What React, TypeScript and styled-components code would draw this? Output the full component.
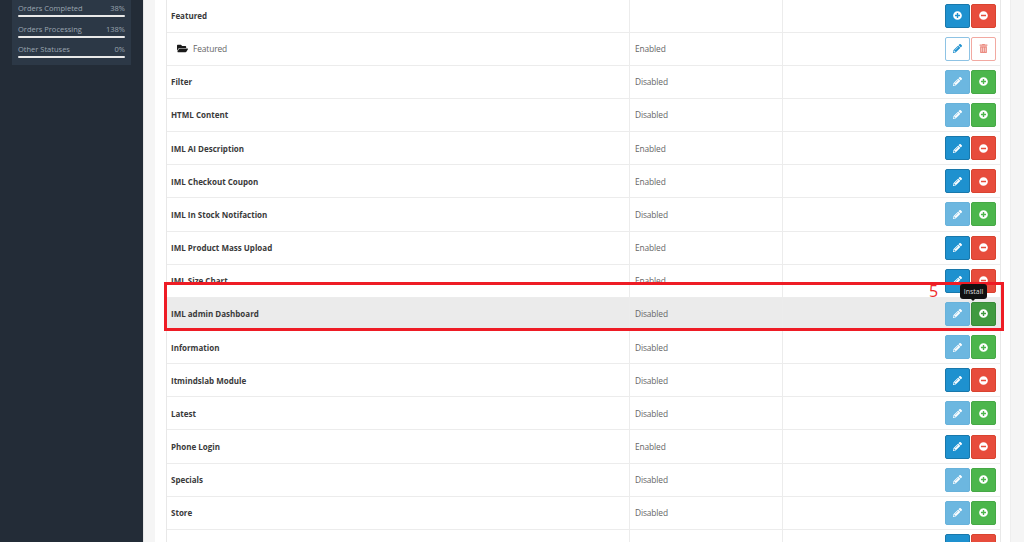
import React from "react";
import styled, { createGlobalStyle } from "styled-components";
import { FaPlusCircle, FaMinusCircle, FaPencilAlt, FaTrashAlt, FaFolderOpen } from "react-icons/fa";

const Global = createGlobalStyle`
  html, body { margin: 0; padding: 0; height: 100%; overflow: hidden; background: #f5f5f5; }
  body { font-family: "Open Sans", "Liberation Sans", sans-serif; }
  * { box-sizing: border-box; }
`;

const Page = styled.div`
  position: relative;
  display: flex;
  width: 1024px;
  height: 542px;
  overflow: hidden;
`;

const Sidebar = styled.aside`
  width: 144px;
  flex: none;
  background: #232c37;
  border-right: 1px solid #e6e6e6;
`;

const StatsBox = styled.div`
  margin: 0 12px;
  width: 119px;
  height: 65px;
  padding: 3px 6px 0;
  background: #2c3846;
  display: flex;
  flex-direction: column;
  gap: 6.5px;
`;

const Stat = styled.div`
  display: flex;
  flex-direction: column;
  gap: 1px;
`;

const StatLabels = styled.div`
  display: flex;
  justify-content: space-between;
  font-size: 7.5px;
  line-height: 11px;
  color: #9aa5b0;
`;

const StatBar = styled.div`
  height: 2px;
  background: #e9e9e9;
  border-radius: 1px;
`;

const Main = styled.main`
  flex: 1;
  padding: 0 13px 0 11px;
`;

const Panel = styled.section`
  background: #fff;
  height: 542px;
  padding: 0 9px 0 11px;
  border-right: 1px solid #eee;
`;

const Table = styled.div`
  border-left: 1px solid #e8e8e8;
  border-right: 1px solid #e8e8e8;
`;

const Row = styled.div<{ $hover?: boolean; $first?: boolean }>`
  display: grid;
  grid-template-columns: 463px 153px 1fr;
  height: ${(p) => (p.$first ? "32.6px" : "33.17px")};
  border-bottom: 1px solid #ececec;
  background: ${(p) => (p.$hover ? "#ebebeb" : "#fff")};
`;

const Cell = styled.div`
  display: flex;
  align-items: center;
  padding: 0 4px 0 5px;
  font-size: 8.4px;
  letter-spacing: -0.12px;
  color: #666;
  border-right: 1px solid #ececec;
  min-width: 0;

  &:last-child {
    border-right: 0;
    justify-content: flex-end;
    gap: 1px;
  }
`;

const Name = styled.span`
  margin-left: -1px;
  font-weight: 700;
  font-size: 8px;
  letter-spacing: 0;
  color: #3a3a3a;
`;

const ChildName = styled.span`
  display: inline-flex;
  align-items: center;
  gap: 5px;
  margin-left: 5px;
  color: #666;

  svg {
    width: 11px;
    height: 11px;
    color: #1a1a1a;
  }
`;

const palette = {
  blue: { bg: "#1e91cf", bd: "#1978ab", fg: "#fff" },
  lightBlue: { bg: "#6cb7e0", bd: "#68b2da", fg: "#fff" },
  red: { bg: "#e74c3c", bd: "#d9432f", fg: "#fff" },
  green: { bg: "#4cb64c", bd: "#46a846", fg: "#fff" },
  greenDark: { bg: "#409a40", bd: "#388a38", fg: "#fff" },
  outlineBlue: { bg: "#fff", bd: "#8ec3e4", fg: "#1e91cf" },
  outlineRed: { bg: "#fff", bd: "#f2a9a1", fg: "#eb8b80" },
};

type Tone = keyof typeof palette;

const ActionButton = styled.span<{ $tone: Tone }>`
  width: 25px;
  height: 24px;
  display: inline-flex;
  align-items: center;
  justify-content: center;
  border-radius: 2px;
  background: ${(p) => palette[p.$tone].bg};
  border: 1px solid ${(p) => palette[p.$tone].bd};
  color: ${(p) => palette[p.$tone].fg};

  svg {
    width: 9px;
    height: 9px;
  }
`;

const Highlight = styled.div`
  position: absolute;
  left: 164px;
  top: 282px;
  width: 840px;
  height: 49px;
  border: 3px solid #ee1c25;
  pointer-events: none;
`;

const StepNumber = styled.span`
  position: absolute;
  left: 929px;
  top: 281px;
  font-size: 16px;
  line-height: 20px;
  color: #ee2b2b;
`;

const Tooltip = styled.div`
  position: absolute;
  left: 960px;
  top: 284px;
  width: 27px;
  height: 15px;
  background: #111;
  color: #ddd;
  border-radius: 3px;
  font-size: 7px;
  line-height: 15px;
  text-align: center;

  &::after {
    content: "";
    position: absolute;
    left: 11px;
    top: 15px;
    border: 2.5px solid transparent;
    border-top-color: #111;
    border-bottom: 0;
  }
`;

type Kind = "header" | "child" | "enabled" | "disabled";
const rows: { name: string; status: string; kind: Kind; hover?: boolean }[] = [
  { name: "Featured", status: "", kind: "header" },
  { name: "Featured", status: "Enabled", kind: "child" },
  { name: "Filter", status: "Disabled", kind: "disabled" },
  { name: "HTML Content", status: "Disabled", kind: "disabled" },
  { name: "IML AI Description", status: "Enabled", kind: "enabled" },
  { name: "IML Checkout Coupon", status: "Enabled", kind: "enabled" },
  { name: "IML In Stock Notifaction", status: "Disabled", kind: "disabled" },
  { name: "IML Product Mass Upload", status: "Enabled", kind: "enabled" },
  { name: "IML Size Chart", status: "Enabled", kind: "enabled" },
  { name: "IML admin Dashboard", status: "Disabled", kind: "disabled", hover: true },
  { name: "Information", status: "Disabled", kind: "disabled" },
  { name: "Itmindslab Module", status: "Disabled", kind: "enabled" },
  { name: "Latest", status: "Disabled", kind: "disabled" },
  { name: "Phone Login", status: "Enabled", kind: "enabled" },
  { name: "Specials", status: "Disabled", kind: "disabled" },
  { name: "Store", status: "Disabled", kind: "disabled" },
  { name: "", status: "", kind: "enabled" },
];

const stats = [
  { label: "Orders Completed", value: "38%" },
  { label: "Orders Processing", value: "138%" },
  { label: "Other Statuses", value: "0%" },
];

function Actions({ kind, hover }: { kind: Kind; hover?: boolean }) {
  if (kind === "header")
    return (
      <>
        <ActionButton $tone="blue"><FaPlusCircle /></ActionButton>
        <ActionButton $tone="red"><FaMinusCircle /></ActionButton>
      </>
    );
  if (kind === "child")
    return (
      <>
        <ActionButton $tone="outlineBlue"><FaPencilAlt /></ActionButton>
        <ActionButton $tone="outlineRed"><FaTrashAlt /></ActionButton>
      </>
    );
  if (kind === "enabled")
    return (
      <>
        <ActionButton $tone="blue"><FaPencilAlt /></ActionButton>
        <ActionButton $tone="red"><FaMinusCircle /></ActionButton>
      </>
    );
  return (
    <>
      <ActionButton $tone="lightBlue"><FaPencilAlt /></ActionButton>
      <ActionButton $tone={hover ? "greenDark" : "green"}><FaPlusCircle /></ActionButton>
    </>
  );
}

export default function App() {
  return (
    <Page>
      <Global />
      <Sidebar>
        <StatsBox>
          {stats.map((s) => (
            <Stat key={s.label}>
              <StatLabels>
                <span>{s.label}</span>
                <span>{s.value}</span>
              </StatLabels>
              <StatBar />
            </Stat>
          ))}
        </StatsBox>
      </Sidebar>
      <Main>
        <Panel>
          <Table>
            {rows.map((r, i) => (
              <Row key={i} $hover={r.hover} $first={i === 0}>
                <Cell>
                  {r.kind === "child" ? (
                    <ChildName><FaFolderOpen />{r.name}</ChildName>
                  ) : (
                    <Name>{r.name}</Name>
                  )}
                </Cell>
                <Cell>{r.status}</Cell>
                <Cell><Actions kind={r.kind} hover={r.hover} /></Cell>
              </Row>
            ))}
          </Table>
        </Panel>
      </Main>
      <Highlight />
      <StepNumber>5</StepNumber>
      <Tooltip>Install</Tooltip>
    </Page>
  );
}
